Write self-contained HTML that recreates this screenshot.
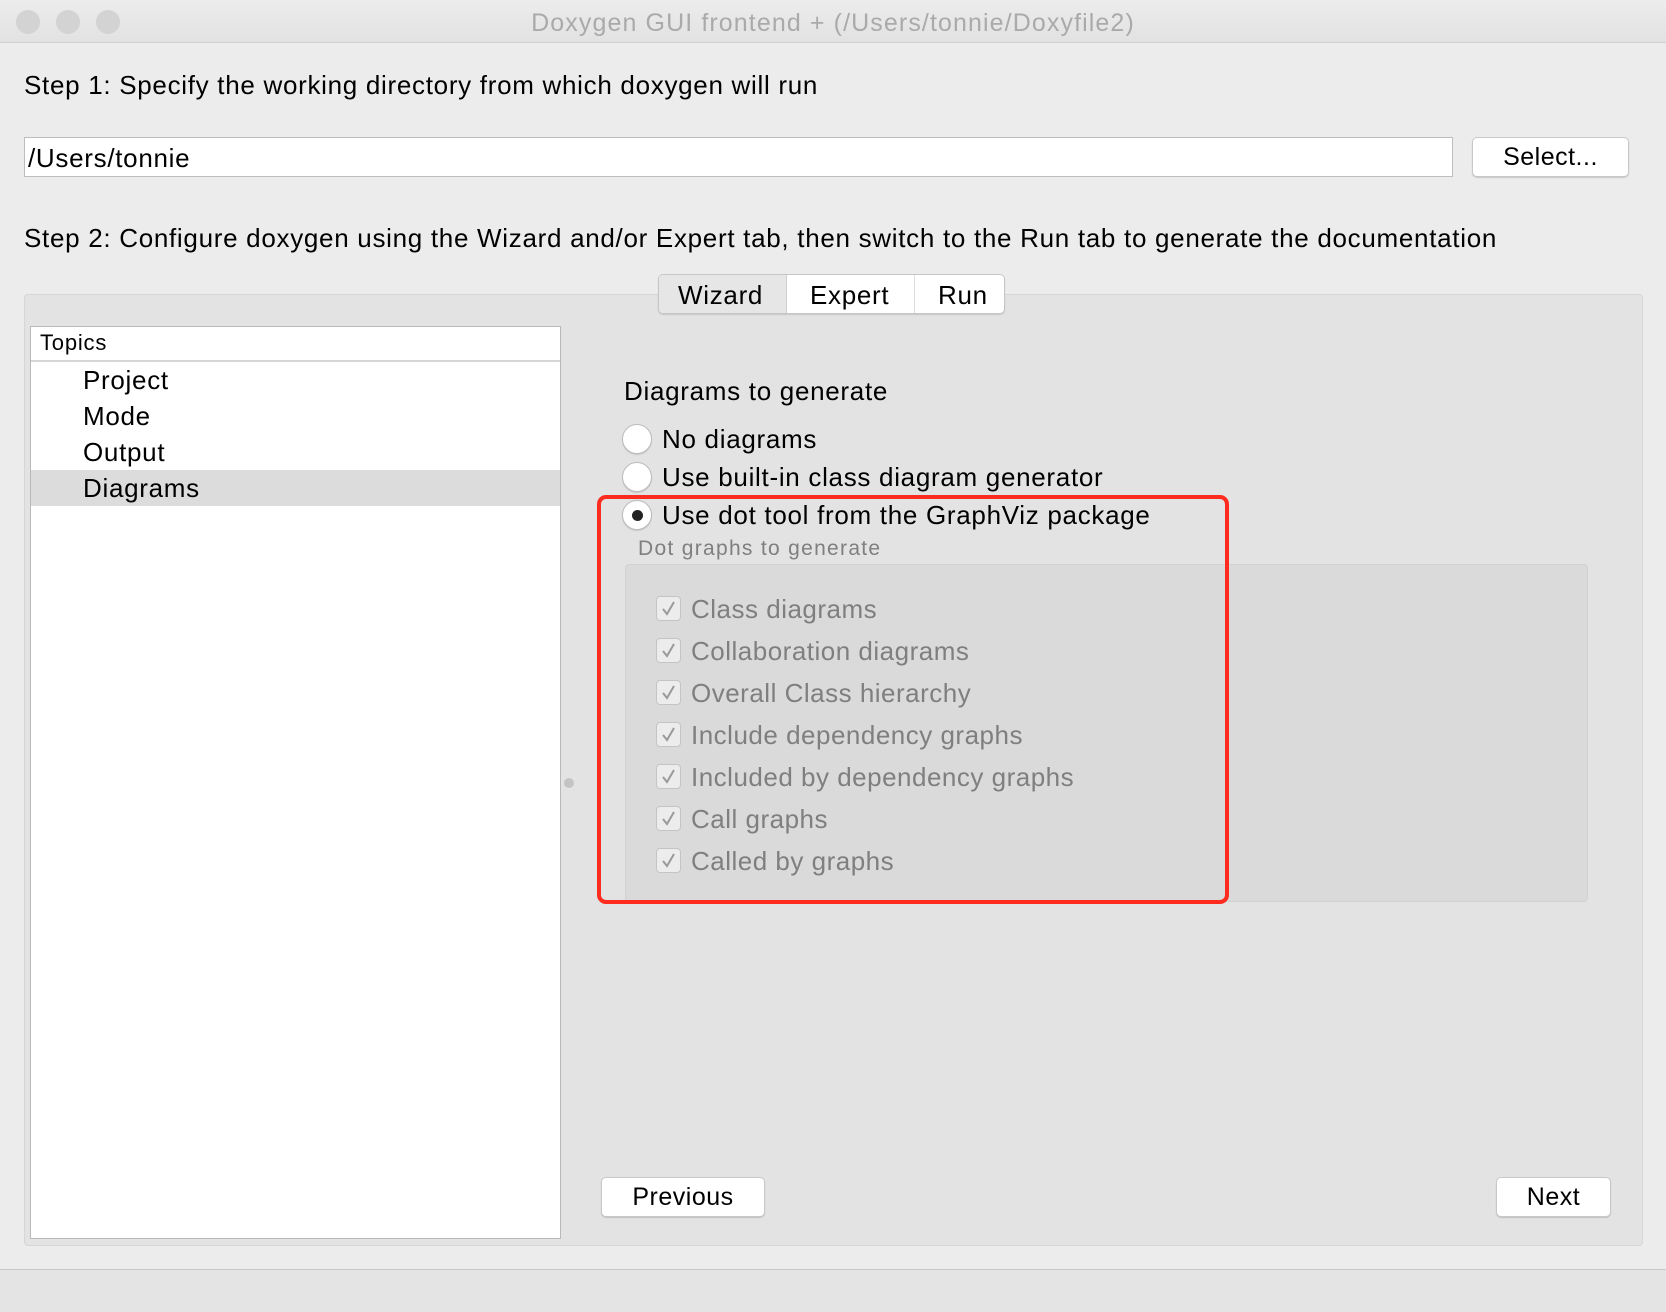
<!DOCTYPE html>
<html><head><meta charset="utf-8"><style>
*{margin:0;padding:0;box-sizing:border-box}
body{width:1666px;height:1312px;background:#ececec;font-family:"Liberation Sans",sans-serif;color:#000;position:relative;overflow:hidden}
.a{position:absolute;white-space:nowrap}
.t{font-size:26px;line-height:30px;letter-spacing:0.7px}
.btn{position:absolute;background:#fff;border:1px solid #c8c8c8;border-radius:5px;box-shadow:0 1px 1px rgba(0,0,0,.15);font-size:25px;text-align:center;letter-spacing:0.5px}
.radio{position:absolute;width:30px;height:30px;border-radius:50%;background:#fff;border:1px solid #bbb;box-shadow:0 1px 1px rgba(0,0,0,.12)}
.cb{position:absolute;left:656px;width:25px;height:25px;background:#ececec;border:1px solid #c4c4c4;border-radius:4px}
.cb svg{position:absolute;left:3px;top:3px}
.cl{position:absolute;left:691px;font-size:26px;line-height:30px;color:#7f7f7f;white-space:nowrap;letter-spacing:0.5px}
</style></head><body>
<div class="a" style="left:0;top:0;width:1666px;height:43px;background:linear-gradient(#ececec,#e2e2e2);border-bottom:1px solid #d0d0d0"></div>
<div class="a" style="left:16px;top:10px;width:24px;height:24px;border-radius:50%;background:#d3d3d3"></div>
<div class="a" style="left:56px;top:10px;width:24px;height:24px;border-radius:50%;background:#d3d3d3"></div>
<div class="a" style="left:96px;top:10px;width:24px;height:24px;border-radius:50%;background:#d3d3d3"></div>
<div class="a" style="left:0;top:9px;width:1666px;text-align:center;font-size:25px;color:#aaa;letter-spacing:1.1px">Doxygen GUI frontend + (/Users/tonnie/Doxyfile2)</div>

<div class="a t" style="left:24px;top:70px">Step 1: Specify the working directory from which doxygen will run</div>
<div class="a" style="left:24px;top:137px;width:1429px;height:40px;background:#fff;border:1px solid #bdbdbd"></div>
<div class="a t" style="left:28px;top:143px">/Users/tonnie</div>
<div class="btn" style="left:1472px;top:137px;width:157px;height:40px;line-height:38px">Select...</div>
<div class="a t" style="left:24px;top:223px">Step 2: Configure doxygen using the Wizard and/or Expert tab, then switch to the Run tab to generate the documentation</div>

<div class="a" style="left:24px;top:294px;width:1619px;height:952px;background:#e3e3e3;border:1px solid #d6d6d6;border-radius:4px"></div>
<div class="a" style="left:658px;top:274px;width:347px;height:40px;background:#fff;border:1px solid #c6c6c6;border-radius:5px;box-shadow:0 1px 1px rgba(0,0,0,.12);overflow:hidden">
<div class="a" style="left:0;top:0;width:128px;height:40px;background:#e6e6e6;border-right:1px solid #d0d0d0"></div>
<div class="a" style="left:128px;top:0;width:128px;height:40px;border-right:1px solid #ddd"></div>
<div class="a t" style="left:19px;top:5px">Wizard</div>
<div class="a t" style="left:151px;top:5px">Expert</div>
<div class="a t" style="left:279px;top:5px">Run</div>
</div>

<div class="a" style="left:30px;top:326px;width:531px;height:913px;background:#fff;border:1px solid #b9b9b9"></div>
<div class="a" style="left:31px;top:327px;width:529px;height:35px;border-bottom:2px solid #d6d6d6"></div>
<div class="a" style="left:40px;top:330px;font-size:22px;line-height:26px;letter-spacing:0.8px">Topics</div>
<div class="a" style="left:31px;top:470px;width:529px;height:36px;background:#dcdcdc"></div>
<div class="a t" style="left:83px;top:365px">Project</div>
<div class="a t" style="left:83px;top:401px">Mode</div>
<div class="a t" style="left:83px;top:437px">Output</div>
<div class="a t" style="left:83px;top:473px">Diagrams</div>
<div class="a" style="left:564px;top:778px;width:10px;height:10px;border-radius:50%;background:#c4c4c4"></div>

<div class="a t" style="left:624px;top:376px">Diagrams to generate</div>
<div class="radio" style="left:622px;top:424px"></div>
<div class="a t" style="left:662px;top:424px">No diagrams</div>
<div class="radio" style="left:622px;top:462px"></div>
<div class="a t" style="left:662px;top:462px">Use built-in class diagram generator</div>
<div class="radio" style="left:622px;top:500px"><div class="a" style="left:9px;top:9px;width:11px;height:11px;border-radius:50%;background:#222"></div></div>
<div class="a t" style="left:662px;top:500px">Use dot tool from the GraphViz package</div>
<div class="a" style="left:638px;top:537px;font-size:21px;line-height:24px;color:#7f7f7f;letter-spacing:1.3px">Dot graphs to generate</div>
<div class="a" style="left:625px;top:564px;width:963px;height:338px;background:#dadada;border:1px solid #d2d2d2;border-radius:4px"></div>

<div class="cb" style="top:596px"><svg width="18" height="18"><path d="M3 9 L7 14 L14 2" fill="none" stroke="#999" stroke-width="2"/></svg></div><div class="cl" style="top:594px">Class diagrams</div>
<div class="cb" style="top:638px"><svg width="18" height="18"><path d="M3 9 L7 14 L14 2" fill="none" stroke="#999" stroke-width="2"/></svg></div><div class="cl" style="top:636px">Collaboration diagrams</div>
<div class="cb" style="top:680px"><svg width="18" height="18"><path d="M3 9 L7 14 L14 2" fill="none" stroke="#999" stroke-width="2"/></svg></div><div class="cl" style="top:678px">Overall Class hierarchy</div>
<div class="cb" style="top:722px"><svg width="18" height="18"><path d="M3 9 L7 14 L14 2" fill="none" stroke="#999" stroke-width="2"/></svg></div><div class="cl" style="top:720px">Include dependency graphs</div>
<div class="cb" style="top:764px"><svg width="18" height="18"><path d="M3 9 L7 14 L14 2" fill="none" stroke="#999" stroke-width="2"/></svg></div><div class="cl" style="top:762px">Included by dependency graphs</div>
<div class="cb" style="top:806px"><svg width="18" height="18"><path d="M3 9 L7 14 L14 2" fill="none" stroke="#999" stroke-width="2"/></svg></div><div class="cl" style="top:804px">Call graphs</div>
<div class="cb" style="top:848px"><svg width="18" height="18"><path d="M3 9 L7 14 L14 2" fill="none" stroke="#999" stroke-width="2"/></svg></div><div class="cl" style="top:846px">Called by graphs</div>

<div class="a" style="left:597px;top:495px;width:632px;height:409px;border:4px solid #fd2c1f;border-radius:9px"></div>

<div class="btn" style="left:601px;top:1177px;width:164px;height:40px;line-height:38px">Previous</div>
<div class="btn" style="left:1496px;top:1177px;width:115px;height:40px;line-height:38px">Next</div>

<div class="a" style="left:0;top:1269px;width:1666px;height:43px;background:#e4e4e4;border-top:1px solid #c8c8c8"></div>
</body></html>
